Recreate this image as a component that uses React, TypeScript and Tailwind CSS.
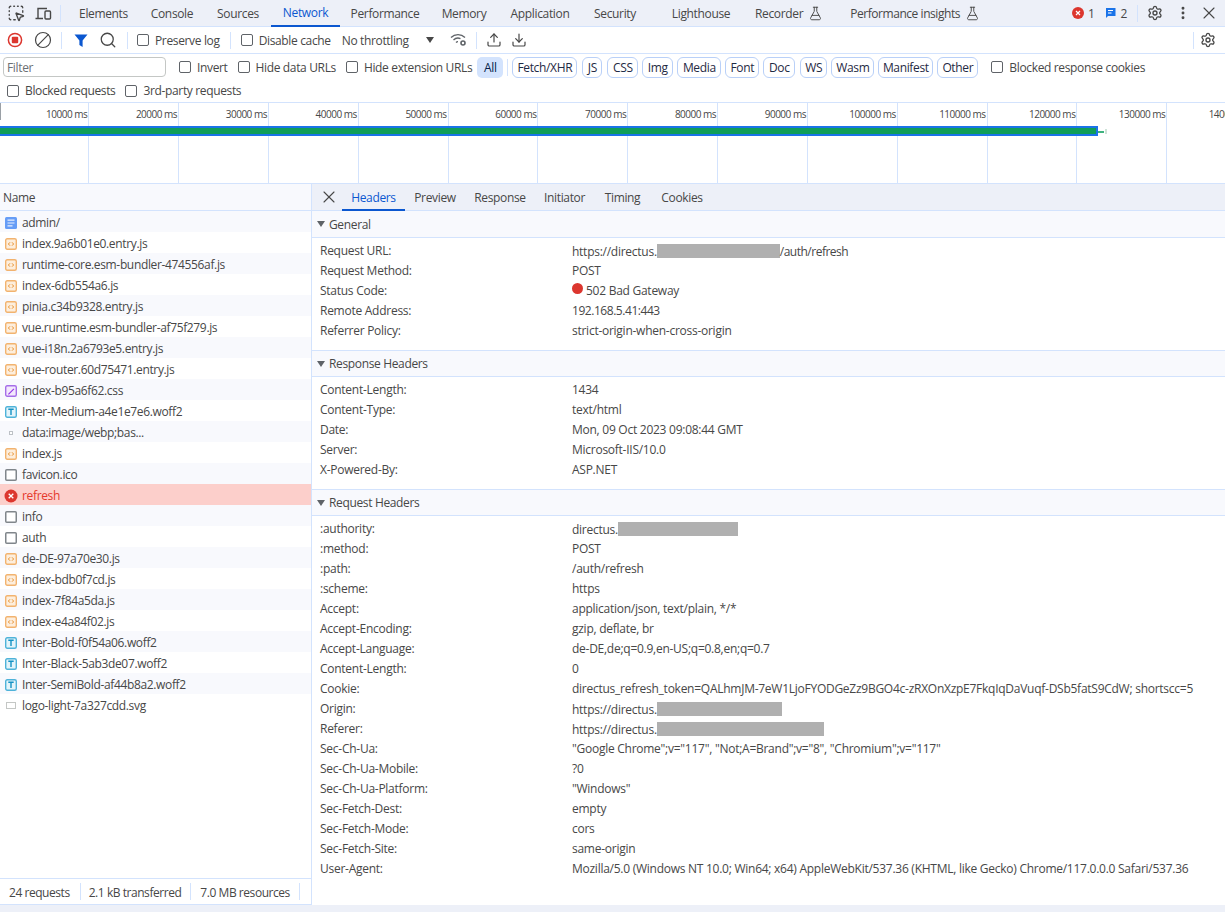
import { Ban, Download, EllipsisVertical, FlaskConical, Search, Settings, SquareDashedMousePointer, Upload, X } from "lucide-react";

const TABS = [
  { label: "Elements", w: "w-[71px]", ml: "ml-[1px]" },
  { label: "Console", w: "w-[66px]", ml: "ml-0" },
  { label: "Sources", w: "w-[66px]", ml: "ml-0" },
  { label: "Network", w: "w-[69px]", ml: "ml-0", active: true },
  { label: "Performance", w: "w-[90px]", ml: "ml-0" },
  { label: "Memory", w: "w-[68px]", ml: "ml-0" },
  { label: "Application", w: "w-[84px]", ml: "ml-0" },
  { label: "Security", w: "w-[66px]", ml: "ml-0" },
  { label: "Lighthouse", w: "w-[86px]", ml: "ml-[10px]" },
];

const CHIPS = [
  { label: "Fetch/XHR", w: "w-[65px]", mr: "mr-[5px]" },
  { label: "JS", w: "w-[20px]", mr: "mr-[5px]" },
  { label: "CSS", w: "w-[31px]", mr: "mr-[4px]" },
  { label: "Img", w: "w-[31px]", mr: "mr-[4px]" },
  { label: "Media", w: "w-[44px]", mr: "mr-[4px]" },
  { label: "Font", w: "w-[34px]", mr: "mr-[4px]" },
  { label: "Doc", w: "w-[32px]", mr: "mr-[5px]" },
  { label: "WS", w: "w-[27px]", mr: "mr-[4px]" },
  { label: "Wasm", w: "w-[43px]", mr: "mr-[4px]" },
  { label: "Manifest", w: "w-[55px]", mr: "mr-[4px]" },
  { label: "Other", w: "w-[41px]", mr: "mr-[4px]" },
];

const REQUESTS: [string, string][] = [
  ["doc", "admin/"],
  ["js", "index.9a6b01e0.entry.js"],
  ["js", "runtime-core.esm-bundler-474556af.js"],
  ["js", "index-6db554a6.js"],
  ["js", "pinia.c34b9328.entry.js"],
  ["js", "vue.runtime.esm-bundler-af75f279.js"],
  ["js", "vue-i18n.2a6793e5.entry.js"],
  ["js", "vue-router.60d75471.entry.js"],
  ["css", "index-b95a6f62.css"],
  ["font", "Inter-Medium-a4e1e7e6.woff2"],
  ["dot", "data:image/webp;bas..."],
  ["js", "index.js"],
  ["box", "favicon.ico"],
  ["error", "refresh"],
  ["box", "info"],
  ["box", "auth"],
  ["js", "de-DE-97a70e30.js"],
  ["js", "index-bdb0f7cd.js"],
  ["js", "index-7f84a5da.js"],
  ["js", "index-e4a84f02.js"],
  ["font", "Inter-Bold-f0f54a06.woff2"],
  ["font", "Inter-Black-5ab3de07.woff2"],
  ["font", "Inter-SemiBold-af44b8a2.woff2"],
  ["svg", "logo-light-7a327cdd.svg"],
];

const TICKS = [
  "10000 ms", "20000 ms", "30000 ms", "40000 ms", "50000 ms", "60000 ms", "70000 ms",
  "80000 ms", "90000 ms", "100000 ms", "110000 ms", "120000 ms", "130000 ms", "140000 ms",
];

const RESPONSE_HEADERS = [
  ["Content-Length:", "1434"],
  ["Content-Type:", "text/html"],
  ["Date:", "Mon, 09 Oct 2023 09:08:44 GMT"],
  ["Server:", "Microsoft-IIS/10.0"],
  ["X-Powered-By:", "ASP.NET"],
];

const REQUEST_HEADERS_TOP = [
  [":method:", "POST"],
  [":path:", "/auth/refresh"],
  [":scheme:", "https"],
  ["Accept:", "application/json, text/plain, */*"],
  ["Accept-Encoding:", "gzip, deflate, br"],
  ["Accept-Language:", "de-DE,de;q=0.9,en-US;q=0.8,en;q=0.7"],
  ["Content-Length:", "0"],
  ["Cookie:", "directus_refresh_token=QALhmJM-7eW1LjoFYODGeZz9BGO4c-zRXOnXzpE7FkqIqDaVuqf-DSb5fatS9CdW; shortscc=5"],
];

const REQUEST_HEADERS_BOTTOM = [
  ["Sec-Ch-Ua:", "\"Google Chrome\";v=\"117\", \"Not;A=Brand\";v=\"8\", \"Chromium\";v=\"117\""],
  ["Sec-Ch-Ua-Mobile:", "?0"],
  ["Sec-Ch-Ua-Platform:", "\"Windows\""],
  ["Sec-Fetch-Dest:", "empty"],
  ["Sec-Fetch-Mode:", "cors"],
  ["Sec-Fetch-Site:", "same-origin"],
  ["User-Agent:", "Mozilla/5.0 (Windows NT 10.0; Win64; x64) AppleWebKit/537.36 (KHTML, like Gecko) Chrome/117.0.0.0 Safari/537.36"],
];

function Check({ label, className = "", textClass = "pt-px" }: { label: string; className?: string; textClass?: string }) {
  return (
    <label className={`flex items-center gap-[6px] shrink-0 ${className}`}>
      <span className="w-[12px] h-[12px] rounded-[2px] border border-[#5f6368] bg-white shrink-0" />
      <span className={`whitespace-nowrap ${textClass}`}>{label}</span>
    </label>
  );
}

function Sep({ className = "" }: { className?: string }) {
  return <span className={`w-px h-[17px] bg-[#d3e3fd] shrink-0 ${className}`} />;
}

function Blur({ className }: { className: string }) {
  return <span className={`inline-block h-[14px] align-[-2px] bg-[#b0b0b0] ${className}`} />;
}

function FileIcon({ kind }: { kind: string }) {
  if (kind === "error") {
    return (
      <svg width="14" height="14" viewBox="0 0 14 14" className="shrink-0 -mx-px">
        <circle cx="7" cy="7" r="6.5" fill="#dc362e" />
        <path d="M4.7 4.7l4.6 4.6M9.3 4.7l-4.6 4.6" stroke="#fff" strokeWidth="1.3" />
      </svg>
    );
  }
  if (kind === "dot") {
    return (
      <svg width="12" height="12" viewBox="0 0 12 12" className="shrink-0">
        <rect x="4.5" y="4.5" width="3" height="3" fill="#fff" stroke="#bdc1c6" />
      </svg>
    );
  }
  if (kind === "svg") {
    return (
      <svg width="12" height="12" viewBox="0 0 12 12" className="shrink-0">
        <rect x="1.5" y="2.5" width="9" height="6" fill="#fff" stroke="#c4c7c5" />
      </svg>
    );
  }
  if (kind === "box") {
    return (
      <svg width="12" height="12" viewBox="0 0 12 12" className="shrink-0">
        <rect x="0.75" y="0.75" width="10.5" height="10.5" rx="1" fill="#fff" stroke="#80868b" strokeWidth="1.5" />
      </svg>
    );
  }
  if (kind === "js") {
    return (
      <svg width="12" height="12" viewBox="0 0 12 12" className="shrink-0">
        <rect x="0.7" y="0.7" width="10.6" height="10.6" rx="1.5" fill="#fdeedd" stroke="#f2b36f" strokeWidth="1.4" />
        <path d="M5 4.3L3.4 6 5 7.7M7 4.3L8.6 6 7 7.7" fill="none" stroke="#e8912d" />
      </svg>
    );
  }
  if (kind === "font") {
    return (
      <svg width="12" height="12" viewBox="0 0 12 12" className="shrink-0">
        <rect x="0.7" y="0.7" width="10.6" height="10.6" rx="1.5" fill="#e3f4fa" stroke="#4fb3d9" strokeWidth="1.4" />
        <path d="M3.3 3.3h5.4M6 3.3v5.6" fill="none" stroke="#1592c4" strokeWidth="1.4" />
      </svg>
    );
  }
  if (kind === "css") {
    return (
      <svg width="12" height="12" viewBox="0 0 12 12" className="shrink-0">
        <rect x="0.7" y="0.7" width="10.6" height="10.6" rx="1.5" fill="#f3e8fd" stroke="#a56ee8" strokeWidth="1.4" />
        <path d="M3 9l5.5-5.5 0.8 0.8L3.8 9.8z" fill="#9334e6" />
      </svg>
    );
  }
  return (
    <svg width="12" height="12" viewBox="0 0 12 12" className="shrink-0">
      <rect x="0" y="0" width="12" height="12" rx="1.5" fill="#669df6" />
      <path d="M2.5 3.2h7M2.5 6h7M2.5 8.8h5" stroke="#e8f0fe" strokeWidth="1.2" />
    </svg>
  );
}

function Row({ name, children }: { name: string; children: React.ReactNode }) {
  return (
    <div className="grid grid-cols-[252px_1fr] h-[20px] items-center pl-[8px]">
      <span className="whitespace-nowrap">{name}</span>
      <span className="whitespace-nowrap">{children}</span>
    </div>
  );
}

function SectionHead({ title, top = false }: { title: string; top?: boolean }) {
  return (
    <div className={`flex items-center h-[27px] bg-[#f8f9fd] border-b border-[#d3e3fd] pl-[5px] ${top ? "" : "border-t"}`}>
      <span className="w-0 h-0 border-x-[4px] border-x-transparent border-t-[6px] border-t-[#5f6368] mr-[4px]" />
      <span className="font-medium tracking-[-0.35px] pt-px">{title}</span>
    </div>
  );
}

export default function App() {
  return (
    <div className="w-[1225px] h-[912px] overflow-hidden flex flex-col bg-white text-[#474747] text-[12px] leading-none font-['Open_Sans','Noto_Sans',sans-serif] tracking-[-0.35px]">
      {/* main tab strip */}
      <div className="flex items-stretch h-[27px] bg-[#edf0f8] border-b border-[#d3e3fd] shrink-0">
        <div className="flex items-center w-[67px] shrink-0">
          <SquareDashedMousePointer size={18} strokeWidth={1.8} className="ml-[7px] text-[#474747]" />
          <svg width="17" height="15" viewBox="0 0 17 15" className="ml-[10px]" fill="none" stroke="#474747" strokeWidth="1.4">
            <path d="M3 12V2.5h9M0.5 12.5H8" />
            <rect x="10" y="5" width="5.5" height="8" rx="1" />
          </svg>
          <Sep className="ml-[8px]" />
        </div>
        {TABS.map((t) => (
          <div
            key={t.label}
            className={`flex items-center justify-center shrink-0 pt-px ${t.w} ${t.ml} ${t.active ? "text-[#0b57d0] border-b-2 border-[#0b57d0] -mb-px pt-[2px]" : ""}`}
          >
            {t.label}
          </div>
        ))}
        <div className="flex items-center ml-[11px] gap-[5px] shrink-0 pt-px">
          Recorder <FlaskConical size={15} strokeWidth={1.5} />
        </div>
        <div className="flex items-center ml-[27px] gap-[5px] shrink-0 pt-px tracking-[-0.45px]">
          Performance insights <FlaskConical size={15} strokeWidth={1.5} />
        </div>
        <div className="flex items-center ml-auto shrink-0">
          <svg width="12" height="12" viewBox="0 0 12 12" className="ml-px">
            <circle cx="6" cy="6" r="6" fill="#dc362e" />
            <path d="M4 4l4 4M8 4l-4 4" stroke="#fff" strokeWidth="1.2" />
          </svg>
          <span className="ml-[4px] pt-px">1</span>
          <svg width="11" height="12" viewBox="0 0 11 12" className="ml-[11px]">
            <path d="M1 1h9.5v8H3l-2 2z" fill="#1a73e8" />
            <path d="M3 3.5h5M3 6h3.5" stroke="#fff" />
          </svg>
          <span className="ml-[4px] mr-px pt-px">2</span>
          <Sep className="ml-[9px]" />
          <Settings size={16} strokeWidth={2} className="ml-[9px]" />
          <EllipsisVertical size={16} strokeWidth={2.4} className="ml-[12px]" />
          <X size={20} strokeWidth={1.3} className="ml-[8px] mr-[6px]" />
        </div>
      </div>

      {/* network toolbar */}
      <div className="flex items-center h-[27px] border-b border-[#d3e3fd] shrink-0">
        <svg width="16" height="16" viewBox="0 0 16 16" className="ml-[7px] shrink-0">
          <circle cx="8" cy="8" r="6.6" fill="none" stroke="#dc362e" strokeWidth="1.5" />
          <rect x="4.8" y="4.8" width="6.4" height="6.4" rx="1" fill="#dc362e" />
        </svg>
        <Ban size={18} strokeWidth={1.6} className="ml-[11px] shrink-0 -scale-x-100" />
        <Sep className="ml-[9px]" />
        <svg width="14" height="13" viewBox="0 0 14 13" className="ml-[12px] shrink-0">
          <path d="M0.5 0.5h13L8.6 6.6V13l-3.2-2V6.6z" fill="#0b57d0" />
        </svg>
        <Search size={18} strokeWidth={1.7} className="ml-[11px] shrink-0" />
        <Sep className="ml-[10px]" />
        <Check label="Preserve log" className="ml-[9px]" textClass="pt-[2px]" />
        <Sep className="ml-[10px]" />
        <Check label="Disable cache" className="ml-[10px]" textClass="pt-[2px]" />
        <span className="ml-[11px] whitespace-nowrap pt-[2px]">No throttling</span>
        <span className="ml-[17px] w-0 h-0 border-x-[4px] border-x-transparent border-t-[6px] border-t-[#474747]" />
        <svg width="17" height="14" viewBox="0 0 17 14" fill="none" stroke="#5f6368" strokeWidth="1.3" className="ml-[16px] shrink-0">
          <path d="M1 4.5a10 10 0 0 1 14 0M3.5 7a6.4 6.4 0 0 1 7 -1.4M6 9.5a2.8 2.8 0 0 1 2-.8" />
          <circle cx="13" cy="10" r="2" strokeWidth="1.6" />
        </svg>
        <Sep className="ml-[9px]" />
        <Upload size={16} strokeWidth={1.8} className="ml-[9px] shrink-0" />
        <Download size={16} strokeWidth={1.8} className="ml-[9px] shrink-0" />
        <Sep className="ml-auto" />
        <Settings size={16} strokeWidth={2} className="ml-[6px] mr-[9px] shrink-0" />
      </div>

      {/* filter row */}
      <div className="flex items-center h-[26px] shrink-0">
        <div className="ml-[3px] w-[163px] h-[20px] border border-[#c4c7c5] rounded-[4px] flex items-center pl-[3px] pt-px text-[#6b6f73] shrink-0">
          Filter
        </div>
        <Check label="Invert" className="ml-[13px]" />
        <Check label="Hide data URLs" className="ml-[10px]" />
        <Check label="Hide extension URLs" className="ml-[10px]" />
        <span className="ml-[5px] w-[26px] h-[21px] rounded-[5px] bg-[#d3e3fd] text-[#041e49] flex items-center justify-center pt-px shrink-0">
          All
        </span>
        <Sep className="ml-[4px] mr-[4px]" />
        {CHIPS.map((c) => (
          <span
            key={c.label}
            className={`${c.w} ${c.mr} h-[21px] rounded-[6px] border border-[#b9d0f8] text-[#1f2a44] flex items-center justify-center pt-px shrink-0 whitespace-nowrap`}
          >
            {c.label}
          </span>
        ))}
        <Check label="Blocked response cookies" className="ml-[9px]" />
      </div>

      <div className="flex items-center h-[23px] border-b border-[#d3e3fd] shrink-0">
        <Check label="Blocked requests" className="ml-[7px]" textClass="" />
        <Check label="3rd-party requests" className="ml-[10px]" textClass="" />
      </div>

      {/* overview timeline */}
      <div className="relative flex h-[81px] border-b border-[#d3e3fd] shrink-0 overflow-hidden">
        {TICKS.map((t, i) => (
          <div key={t} className={`shrink-0 border-r border-[#d3e3fd] text-right pr-[1px] pt-[6px] text-[10px] tracking-[-0.5px] ${i === 0 ? "w-[89.3px]" : "w-[89.83px]"}`}>
            <span className="whitespace-nowrap">{t}</span>
          </div>
        ))}
        <span className="absolute left-0 top-0 h-[17px] w-px bg-[#9aa0a6]" />
        <span className="absolute left-0 top-[23px] h-[10px] w-[1098px] bg-[#1a73e8] flex items-center">
          <span className="block h-[6px] w-[1096px] bg-[#0f9d58]" />
        </span>
        <span className="absolute left-[1098px] top-[28px] h-[2px] w-[6px] bg-[#3fb27f]" />
        <span className="absolute left-[1105px] top-[26px] h-[5px] w-[2px] bg-[#cfe3d8]" />
      </div>

      {/* requests + details */}
      <div className="flex flex-1 min-h-0">
        <div className="w-[312px] shrink-0 flex flex-col border-r border-[#d3e3fd]">
          <div className="flex items-center h-[27px] bg-[#f8f9fd] border-b border-[#d3e3fd] pl-[3px] pt-px shrink-0">Name</div>
          <div className="flex-1 min-h-0">
            {REQUESTS.map(([kind, name], i) => (
              <div
                key={name}
                className={`flex items-center h-[21px] pl-[5px] pt-[2px] gap-[5px] whitespace-nowrap ${kind === "error" ? "bg-[#fccfcb] text-[#e5392c]" : i % 2 === 0 ? "bg-[#f8f9fd]" : "bg-white"}`}
              >
                <FileIcon kind={kind} />
                <span>{name}</span>
              </div>
            ))}
          </div>
          <div className="flex items-center h-[27px] border-t border-b border-[#d3e3fd] pl-[9px] shrink-0 tracking-[-0.45px]">
            <span className="pt-[2px]">24 requests</span>
            <Sep className="ml-[10px]" />
            <span className="ml-[8px] pt-[2px]">2.1 kB transferred</span>
            <Sep className="ml-[9px]" />
            <span className="ml-[9px] pt-[2px]">7.0 MB resources</span>
            <Sep className="ml-[9px]" />
          </div>
        </div>

        <div className="flex-1 min-w-0 flex flex-col tracking-[-0.26px]">
          <div className="flex items-stretch h-[27px] bg-[#edf0f8] border-b border-[#d3e3fd] shrink-0 tracking-[-0.35px]">
            <span className="w-[30px] flex items-center justify-center pl-[3px]">
              <X size={20} strokeWidth={1.3} />
            </span>
            <span className="w-[63px] flex items-center justify-center text-[#0b57d0] border-b-2 border-[#0b57d0] -mb-px pt-[2px]">Headers</span>
            <span className="w-[60px] flex items-center justify-center pt-px">Preview</span>
            <span className="w-[70px] flex items-center justify-center pt-px">Response</span>
            <span className="w-[59px] flex items-center justify-center pt-px">Initiator</span>
            <span className="w-[57px] flex items-center justify-center pt-px">Timing</span>
            <span className="w-[62px] flex items-center justify-center pt-px">Cookies</span>
          </div>

          <SectionHead title="General" top />
          <div className="pt-[3px] pb-[9px]">
            <Row name="Request URL:">
              https://directus.<Blur className="w-[123px]" /><span className="tracking-[-0.5px]">/auth/refresh</span>
            </Row>
            <Row name="Request Method:">POST</Row>
            <Row name="Status Code:">
              <span className="inline-block w-[11px] h-[11px] rounded-full bg-[#dc362e] mr-[3px] align-[1px] -mt-[3px]" />
              502 Bad Gateway
            </Row>
            <Row name="Remote Address:"><span className="tracking-[-0.45px]">192.168.5.41:443</span></Row>
            <Row name="Referrer Policy:">strict-origin-when-cross-origin</Row>
          </div>

          <SectionHead title="Response Headers" />
          <div className="pt-[3px] pb-[9px]">
            {RESPONSE_HEADERS.map(([k, v]) => (
              <Row key={k} name={k}>{v}</Row>
            ))}
          </div>

          <SectionHead title="Request Headers" />
          <div className="pt-[3px]">
            <Row name=":authority:">
              directus.s<Blur className="w-[120px] -ml-[5px]" />
            </Row>
            {REQUEST_HEADERS_TOP.map(([k, v]) => (
              <Row key={k} name={k}>{v}</Row>
            ))}
            <Row name="Origin:">
              https://directus.<Blur className="w-[125px]" />
            </Row>
            <Row name="Referer:">
              https://directus.<Blur className="w-[167px]" />
            </Row>
            {REQUEST_HEADERS_BOTTOM.map(([k, v]) => (
              <Row key={k} name={k}>{v}</Row>
            ))}
          </div>
        </div>
      </div>

      <div className="h-[7px] bg-[#edf0f8] shrink-0" />
    </div>
  );
}
